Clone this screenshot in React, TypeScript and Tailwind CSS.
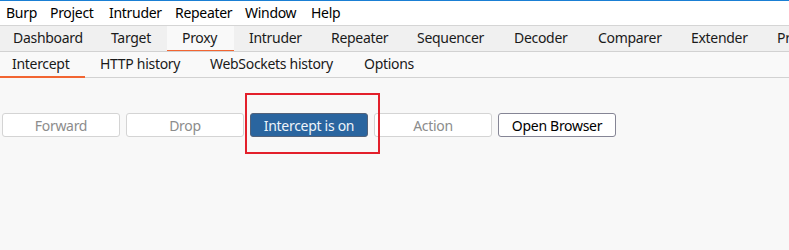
import React from "react";

const menus = [
  { label: "Burp", w: "w-[44px]" },
  { label: "Project", w: "w-[59px]" },
  { label: "Intruder", w: "w-[66px]" },
  { label: "Repeater", w: "w-[70px]" },
  { label: "Window", w: "w-[66px]" },
  { label: "Help", w: "w-[50px]" },
];

const tabs = [
  { label: "Dashboard", w: "w-[96px] pl-[13px]" },
  { label: "Target", w: "w-[71px] pl-[15px]" },
  { label: "Proxy", w: "w-[67px] pl-[15px]", active: true },
  { label: "Intruder", w: "w-[82px] pl-[15px]" },
  { label: "Repeater", w: "w-[86px] pl-[15px]" },
  { label: "Sequencer", w: "w-[97px] pl-[15px]" },
  { label: "Decoder", w: "w-[84px] pl-[15px]" },
  { label: "Comparer", w: "w-[93px] pl-[15px]" },
  { label: "Extender", w: "w-[86px] pl-[15px]" },
  { label: "Project options", w: "w-[120px] pl-[15px]" },
];

const subTabs = [
  { label: "Intercept", w: "w-[85px] pl-[12px]", active: true },
  { label: "HTTP history", w: "w-[110px] pl-[15px]" },
  { label: "WebSockets history", w: "w-[154px] pl-[15px]" },
  { label: "Options", w: "w-[100px] pl-[15px]" },
];

function ActionButton({ label, kind }: { label: string; kind: "off" | "on" | "normal" }) {
  const styles = {
    off: "border-[#d4d4d4] bg-white text-[#8c8c8c]",
    on: "border-[#52627a] bg-[#2a659f] text-[#eef4fa]",
    normal: "border-[#858595] bg-white text-black",
  };
  return (
    <div
      className={`flex h-[24px] w-[118px] shrink-0 items-center justify-center rounded-[3px] border text-[14px] ${styles[kind]}`}
    >
      {label}
    </div>
  );
}

export default function App() {
  return (
    <div
      className="relative h-[250px] w-[789px] overflow-hidden bg-[#f8f8f8] text-[14px] tracking-[-0.3px] text-[#1a1a1a]"
      style={{ fontFamily: '"Noto Sans", "Open Sans", sans-serif' }}
    >
      <div className="h-px bg-[#1a7fd4]" />
      <div className="flex h-[25px] items-center border-b border-[#d5d5d5] bg-white pl-[6px] text-black">
        {menus.map((m) => (
          <div key={m.label} className={`${m.w} shrink-0 leading-none`}>
            {m.label}
          </div>
        ))}
      </div>
      <div className="flex h-[26px] overflow-hidden border-b border-[#d2d2d2] bg-[#f0f0f0]">
        {tabs.map((t) => (
          <div
            key={t.label}
            className={`${t.w} relative flex shrink-0 items-center whitespace-nowrap pb-[2px] ${
              t.active ? "bg-[#f9f9f9]" : ""
            }`}
          >
            {t.label}
            {t.active && <div className="absolute bottom-[-1px] left-0 right-0 h-[2px] bg-[#f26532]" />}
          </div>
        ))}
      </div>
      <div className="flex h-[26px] border-b border-[#d2d2d2] bg-[#f9f9f9]">
        {subTabs.map((t) => (
          <div key={t.label} className={`${t.w} relative flex shrink-0 items-center whitespace-nowrap pb-[2px]`}>
            {t.label}
            {t.active && <div className="absolute bottom-[-1px] left-0 right-0 h-[2px] bg-[#f26532]" />}
          </div>
        ))}
      </div>
      <div className="flex gap-[6px] pl-[2px] pt-[35px]">
        <ActionButton label="Forward" kind="off" />
        <ActionButton label="Drop" kind="off" />
        <ActionButton label="Intercept is on" kind="on" />
        <ActionButton label="Action" kind="off" />
        <ActionButton label="Open Browser" kind="normal" />
      </div>
      <div className="absolute left-[245px] top-[93px] h-[61px] w-[135px] border-2 border-[#e3202b]" />
    </div>
  );
}
